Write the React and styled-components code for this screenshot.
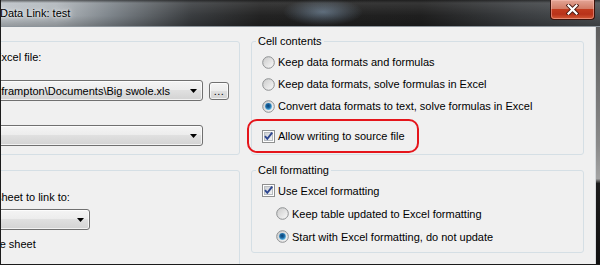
import React, { useId } from 'react';
import styled, { createGlobalStyle } from 'styled-components';

const GlobalStyle = createGlobalStyle`
  html, body {
    margin: 0;
    padding: 0;
    background: #f0f0f0;
    overflow: hidden;
  }
  body {
    font-family: "Liberation Sans", Arial, sans-serif;
    font-size: 11px;
    color: #000;
  }
`;

const Window = styled.div`
  width: 600px;
  height: 265px;
  box-sizing: border-box;
  display: flex;
  flex-direction: column;
  border-left: 1px solid #1b1b1b;
  border-bottom: 1px solid #1b1b1b;
  overflow: hidden;
  background: #f0f0f0;
`;

const TitleBar = styled.div`
  flex: none;
  height: 26px;
  display: flex;
  align-items: flex-start;
  border-bottom: 1px solid #8d959c;
  background:
    linear-gradient(to bottom, rgba(30, 30, 30, 0.6) 0, rgba(255, 255, 255, 0.1) 3px, rgba(255, 255, 255, 0) 60%, rgba(0, 0, 0, 0.2) 100%),
    radial-gradient(ellipse 40px 14px at 322px 12px, rgba(110, 130, 150, 0.75), rgba(110, 130, 150, 0)),
    linear-gradient(to right, #bcc2c7 0, #b0b6bb 55px, #7d848a 110px, #3a3d40 190px, #232323 260px, #1f1f1f 420px, #3b3e41 520px, #4a4e51 600px);
`;

const TitleText = styled.span`
  margin-left: -1px;
  line-height: 26px;
  font-size: 11px;
  color: #000;
  text-shadow: 0 0 6px rgba(255, 255, 255, 0.9), 0 0 3px rgba(255, 255, 255, 0.8);
`;

const CloseButton = styled.div`
  margin-left: auto;
  margin-right: 5px;
  width: 45px;
  height: 20px;
  box-sizing: border-box;
  border: 1px solid #3b120b;
  border-top: none;
  border-radius: 0 0 4px 4px;
  background: linear-gradient(to bottom, #e3a595 0, #d27c66 45%, #c13b1e 50%, #b8321a 75%, #d35a36 100%);
  box-shadow: inset 0 0 0 1px rgba(255, 200, 190, 0.45);
  display: flex;
  align-items: center;
  justify-content: center;
`;

const Body = styled.div`
  flex: 1;
  min-height: 0;
  display: flex;
`;

const Content = styled.div`
  flex: 1;
  display: flex;
  align-items: flex-start;
  gap: 11px;
  padding-top: 6px;
`;

const RightFrame = styled.div`
  flex: none;
  width: 4px;
  border-left: 1px solid #d6dadd;
  background: linear-gradient(to bottom, #5d5d5d 0, #8b8b8b 50%, #a3a3a3 64%, #1c1c1c 66%, #111 100%);
`;

const LeftColumn = styled.div`
  flex: none;
  margin-left: -101px;
  width: 340px;
  display: flex;
  flex-direction: column;
`;

const RightColumn = styled.div`
  flex: none;
  width: 333px;
  display: flex;
  flex-direction: column;
`;

const GroupBox = styled.div`
  box-sizing: border-box;
  border: 1px solid #d5dfe5;
  border-radius: 3px;
  margin-top: ${(p) => p.$top}px;
  padding: ${(p) => p.$padTop}px 0 ${(p) => p.$padBottom}px ${(p) => p.$pad}px;
  display: flex;
  flex-direction: column;
  align-items: flex-start;
`;

const Fieldset = styled.fieldset`
  margin: ${(p) => p.$top}px 0 0 0;
  padding: 0;
  min-inline-size: 0;
  border: 1px solid #d5dfe5;
  border-radius: 3px;
`;

const Legend = styled.legend`
  margin-left: 4px;
  padding: 0 2px;
  line-height: 16px;
`;

const Inner = styled.div`
  display: flex;
  flex-direction: column;
  padding: ${(p) => p.$padTop}px 0 ${(p) => p.$padBottom}px 10px;
`;

const Label = styled.div`
  line-height: 16px;
  white-space: nowrap;
  margin-top: ${(p) => p.$top || 0}px;
`;

const Row = styled.div`
  display: flex;
  align-items: center;
  gap: 3px;
  height: ${(p) => p.$h}px;
  padding-left: ${(p) => p.$indent || 0}px;
  margin-top: ${(p) => p.$top || 0}px;
  white-space: nowrap;
`;

const Highlight = styled.div`
  box-sizing: border-box;
  width: 172px;
  height: 34px;
  margin: 2px 0 1px -15px;
  padding-left: 13px;
  border: 2px solid #e5151b;
  border-radius: 10px;
  display: flex;
  align-items: center;
  gap: 3px;
  white-space: nowrap;
`;

const FileRow = styled.div`
  display: flex;
  align-items: center;
  gap: 6px;
  margin-top: ${(p) => p.$top || 0}px;
`;

const Combo = styled.div`
  box-sizing: border-box;
  width: ${(p) => p.$width}px;
  height: 21px;
  margin-top: ${(p) => p.$top || 0}px;
  border: 1px solid #707070;
  border-radius: 3px;
  padding: 0 5px 0 ${(p) => p.$indent || 4}px;
  display: flex;
  align-items: center;
  background: linear-gradient(to bottom, #f4f4f4 0, #ececec 50%, #e0e0e0 50%, #d3d3d3 100%);
  box-shadow: inset 0 0 0 1px rgba(255, 255, 255, 0.7);
`;

const ComboValue = styled.span`
  flex: 1;
  overflow: hidden;
  white-space: nowrap;
`;

const SmallButton = styled.div`
  box-sizing: border-box;
  width: 20px;
  height: 18px;
  border: 1px solid #707070;
  border-radius: 3px;
  display: flex;
  align-items: flex-end;
  justify-content: center;
  padding-bottom: 3px;
  line-height: 9px;
  letter-spacing: 0.5px;
  background: linear-gradient(to bottom, #f4f4f4 0, #ececec 50%, #e0e0e0 50%, #d3d3d3 100%);
  box-shadow: inset 0 0 0 1px rgba(255, 255, 255, 0.7);
`;

const Arrow = () => (
  <svg width="7" height="4" viewBox="0 0 7 4">
    <path d="M0 0 H7 L3.5 4 Z" fill="#000" />
  </svg>
);

const CloseGlyph = () => (
  <svg width="13" height="11" viewBox="0 0 13 11">
    <path d="M2.5 1.5 L10.5 9.5 M10.5 1.5 L2.5 9.5" stroke="#4a1a12" strokeWidth="4" strokeLinecap="square" />
    <path d="M2.5 1.5 L10.5 9.5 M10.5 1.5 L2.5 9.5" stroke="#fff" strokeWidth="2.2" strokeLinecap="square" />
  </svg>
);

function Radio({ checked }) {
  const id = useId().replace(/:/g, '');
  return (
    <svg width="13" height="13" viewBox="0 0 13 13" style={{ flex: 'none' }}>
      <defs>
        <linearGradient id={`rf${id}`} x1="0" y1="0" x2="1" y2="1">
          <stop offset="0" stopColor="#c9c9c9" />
          <stop offset="1" stopColor="#fbfbfb" />
        </linearGradient>
        <radialGradient id={`rd${id}`} cx="0.45" cy="0.4" r="0.6">
          <stop offset="0" stopColor="#0b3f72" />
          <stop offset="0.55" stopColor="#1c6aa5" />
          <stop offset="1" stopColor="#6cc0ea" />
        </radialGradient>
      </defs>
      <circle cx="6.5" cy="6.5" r="5.8" fill={`url(#rf${id})`} stroke="#8e9092" strokeWidth="1" />
      {checked && <circle cx="6.5" cy="6.5" r="3.4" fill={`url(#rd${id})`} />}
    </svg>
  );
}

function Check({ checked }) {
  const id = useId().replace(/:/g, '');
  return (
    <svg width="13" height="13" viewBox="0 0 13 13" style={{ flex: 'none' }}>
      <defs>
        <linearGradient id={`cf${id}`} x1="0" y1="0" x2="1" y2="1">
          <stop offset="0" stopColor="#cbcfd3" />
          <stop offset="1" stopColor="#f6f6f6" />
        </linearGradient>
      </defs>
      <rect x="0.5" y="0.5" width="12" height="12" fill="#fff" stroke="#8e8f8f" />
      <rect x="2.5" y="2.5" width="8" height="8" fill={`url(#cf${id})`} stroke="#b8bcc0" />
      {checked && (
        <path d="M3 6.2 L5.3 8.8 L10.2 2.6" fill="none" stroke="#2e4790" strokeWidth="1.9" />
      )}
    </svg>
  );
}

export default function App() {
  return (
    <>
      <GlobalStyle />
      <Window>
        <TitleBar>
          <TitleText>Data Link: test</TitleText>
          <CloseButton>
            <CloseGlyph />
          </CloseButton>
        </TitleBar>
        <Body>
          <Content>
            <LeftColumn>
              <GroupBox $top={8} $pad={37} $padTop={7} $padBottom={8}>
                <Label>Choose an Excel file:</Label>
                <FileRow $top={15}>
                  <Combo $width={265} $indent={14}>
                    <ComboValue>C:\Users\jframpton\Documents\Big swole.xls</ComboValue>
                    <Arrow />
                  </Combo>
                  <SmallButton>...</SmallButton>
                </FileRow>
                <Combo $width={265} $top={24}>
                  <ComboValue>Full path</ComboValue>
                  <Arrow />
                </Combo>
              </GroupBox>
              <GroupBox $top={15} $pad={13} $padTop={18} $padBottom={30}>
                <Label>Select the Excel sheet to link to:</Label>
                <Combo $width={176} $top={4}>
                  <ComboValue>Sheet1</ComboValue>
                  <Arrow />
                </Combo>
                <Row $h={20} $top={4} $indent={25}>
                  <Radio checked />
                  <span>Link entire sheet</span>
                </Row>
              </GroupBox>
            </LeftColumn>
            <RightColumn>
              <Fieldset $top={0}>
                <Legend>Cell contents</Legend>
                <Inner $padTop={2} $padBottom={0}>
                  <Row $h={22}>
                    <Radio />
                    <span>Keep data formats and formulas</span>
                  </Row>
                  <Row $h={22}>
                    <Radio />
                    <span>Keep data formats, solve formulas in Excel</span>
                  </Row>
                  <Row $h={22}>
                    <Radio checked />
                    <span>Convert data formats to text, solve formulas in Excel</span>
                  </Row>
                  <Highlight>
                    <Check checked />
                    <span>Allow writing to source file</span>
                  </Highlight>
                </Inner>
              </Fieldset>
              <Fieldset $top={7}>
                <Legend>Cell formatting</Legend>
                <Inner $padTop={1} $padBottom={4}>
                  <Row $h={23}>
                    <Check checked />
                    <span>Use Excel formatting</span>
                  </Row>
                  <Row $h={23} $indent={14}>
                    <Radio />
                    <span>Keep table updated to Excel formatting</span>
                  </Row>
                  <Row $h={23} $indent={14}>
                    <Radio checked />
                    <span>Start with Excel formatting, do not update</span>
                  </Row>
                </Inner>
              </Fieldset>
            </RightColumn>
          </Content>
          <RightFrame />
        </Body>
      </Window>
    </>
  );
}
